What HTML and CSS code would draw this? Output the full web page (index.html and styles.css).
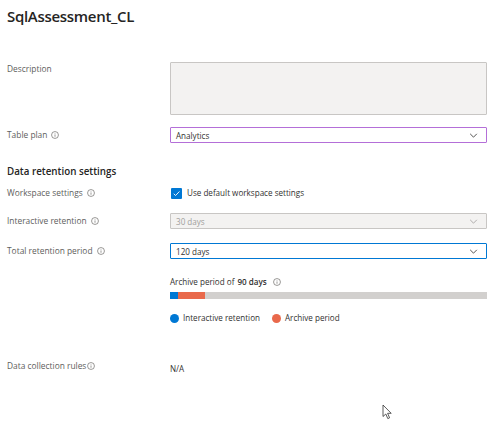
FILE: index.html
```html
<!DOCTYPE html>
<html>
<head>
<meta charset="utf-8">
<link rel="stylesheet" href="styles.css">
</head>
<body>
<div class="page">
  <h1 class="title">SqlAssessment_CL</h1>

  <div class="row row-desc">
    <div class="label">Description</div>
    <div class="field"><div class="textarea"></div></div>
  </div>

  <div class="row row-plan">
    <div class="label">Table plan <svg class="info" viewBox="0 0 10 10"><circle cx="5" cy="5" r="4.3"/><line x1="5" y1="4.3" x2="5" y2="7.2"/><circle class="dot" cx="5" cy="2.9" r="0.5"/></svg></div>
    <div class="field">
      <div class="select select-plan"><span>Analytics</span><svg class="chev" viewBox="0 0 10 6"><polyline points="1,1 5,5 9,1"/></svg></div>
    </div>
  </div>

  <h2 class="section">Data retention settings</h2>

  <div class="row row-ws">
    <div class="label">Workspace settings <svg class="info" viewBox="0 0 10 10"><circle cx="5" cy="5" r="4.3"/><line x1="5" y1="4.3" x2="5" y2="7.2"/><circle class="dot" cx="5" cy="2.9" r="0.5"/></svg></div>
    <div class="field check-field">
      <span class="checkbox"><svg viewBox="0 0 12 12"><polyline points="3,6.3 5,8.2 9.2,3.8"/></svg></span>
      <span class="value">Use default workspace settings</span>
    </div>
  </div>

  <div class="row row-int">
    <div class="label">Interactive retention <svg class="info" viewBox="0 0 10 10"><circle cx="5" cy="5" r="4.3"/><line x1="5" y1="4.3" x2="5" y2="7.2"/><circle class="dot" cx="5" cy="2.9" r="0.5"/></svg></div>
    <div class="field">
      <div class="select select-disabled"><span>30 days</span><svg class="chev" viewBox="0 0 10 6"><polyline points="1,1 5,5 9,1"/></svg></div>
    </div>
  </div>

  <div class="row row-total">
    <div class="label">Total retention period <svg class="info" viewBox="0 0 10 10"><circle cx="5" cy="5" r="4.3"/><line x1="5" y1="4.3" x2="5" y2="7.2"/><circle class="dot" cx="5" cy="2.9" r="0.5"/></svg></div>
    <div class="field">
      <div class="select select-focus"><span>120 days</span><svg class="chev" viewBox="0 0 10 6"><polyline points="1,1 5,5 9,1"/></svg></div>
    </div>
  </div>

  <div class="row row-archive">
    <div class="label"></div>
    <div class="field">
      <div class="archive-text">Archive period of <b>90 days</b> <svg class="info" viewBox="0 0 10 10"><circle cx="5" cy="5" r="4.3"/><line x1="5" y1="4.3" x2="5" y2="7.2"/><circle class="dot" cx="5" cy="2.9" r="0.5"/></svg></div>
      <div class="bar">
        <div class="seg seg-int"></div>
        <div class="seg seg-arc"></div>
      </div>
      <div class="legend">
        <span class="legend-item"><span class="dotmark dot-int"></span>Interactive retention</span>
        <span class="legend-item"><span class="dotmark dot-arc"></span>Archive period</span>
      </div>
    </div>
  </div>

  <div class="row row-dcr">
    <div class="label label-tight">Data collection rules <svg class="info" viewBox="0 0 10 10"><circle cx="5" cy="5" r="4.3"/><line x1="5" y1="4.3" x2="5" y2="7.2"/><circle class="dot" cx="5" cy="2.9" r="0.5"/></svg></div>
    <div class="field"><span class="value">N/A</span></div>
  </div>

  <svg class="cursor" viewBox="0 0 10 16"><path d="M1 1 L1 12.5 L3.8 10 L5.8 14.6 L7.6 13.8 L5.6 9.3 L9.2 9.3 Z"/></svg>
</div>
</body>
</html>
```

FILE: styles.css
```css
html, body {
  margin: 0;
  padding: 0;
  background: #ffffff;
}

body {
  font-family: "Open Sans", "Noto Sans", sans-serif;
  color: #323130;
  width: 500px;
  height: 422px;
  overflow: hidden;
}

.page {
  position: relative;
  padding: 6px 13px 0 7px;
  height: 422px;
  box-sizing: border-box;
}

.title {
  margin: 0;
  font-size: 15px;
  line-height: 20px;
  font-weight: 600;
  color: #252423;
  letter-spacing: -0.3px;
}

.row {
  display: flex;
  align-items: center;
}

.label {
  width: 163px;
  flex: none;
  font-size: 8.4px;
  line-height: 14px;
  color: #605e5c;
  display: flex;
  align-items: center;
  gap: 4px;
}

.label-tight {
  gap: 1px;
}

.field {
  flex: 1;
  min-width: 0;
}

.info {
  width: 8px;
  height: 8px;
  fill: none;
  stroke: #605e5c;
  stroke-width: 0.8;
}

.info .dot {
  fill: #605e5c;
  stroke: none;
}

.row-desc {
  margin-top: 36px;
  align-items: flex-start;
}

.textarea {
  height: 53px;
  box-sizing: border-box;
  background: #f3f2f1;
  border: 1px solid #c8c6c4;
  border-radius: 1px;
}

.row-plan {
  margin-top: 12px;
}

.select {
  height: 16px;
  box-sizing: border-box;
  border: 1px solid #8a8886;
  border-radius: 1px;
  display: flex;
  align-items: center;
  justify-content: space-between;
  padding: 0 8px 0 5px;
  font-size: 8.1px;
  color: #323130;
}

.chev {
  width: 9px;
  height: 5px;
  fill: none;
  stroke: #323130;
  stroke-width: 1;
}

.select-plan {
  border-color: #b46fd8;
}

.select-disabled {
  background: #f3f2f1;
  border-color: #c8c6c4;
  color: #a19f9d;
}

.select-disabled .chev {
  stroke: #a19f9d;
}

.select-focus {
  border-color: #0078d4;
}

.section {
  margin: 22px 0 0;
  font-size: 9.8px;
  line-height: 14px;
  font-weight: 600;
  color: #252423;
}

.row-ws {
  margin-top: 7px;
}

.check-field {
  display: flex;
  align-items: center;
  gap: 5px;
  padding-left: 1px;
}

.checkbox {
  width: 11px;
  height: 11px;
  background: #0078d4;
  border-radius: 1px;
  display: inline-flex;
}

.checkbox svg {
  width: 11px;
  height: 11px;
  fill: none;
  stroke: #ffffff;
  stroke-width: 1;
}

.value {
  font-size: 8.1px;
  line-height: 14px;
  color: #323130;
}

.row-int {
  margin-top: 13px;
}

.row-total {
  margin-top: 14px;
}

.row-archive {
  margin-top: 17px;
}

.archive-text {
  font-size: 8.1px;
  line-height: 12px;
  color: #323130;
  display: flex;
  align-items: center;
  gap: 3px;
}

.archive-text b {
  font-weight: 600;
}

.archive-text .info {
  margin-left: 3px;
}

.bar {
  margin-top: 4px;
  height: 7px;
  background: #d2d0ce;
  display: flex;
}

.seg-int {
  width: 8px;
  background: #0078d4;
}

.seg-arc {
  width: 27px;
  background: #e9694b;
}

.legend {
  margin-top: 13px;
  display: flex;
  gap: 12px;
  font-size: 8.1px;
  line-height: 12px;
  color: #323130;
}

.legend-item {
  display: flex;
  align-items: center;
  gap: 4px;
}

.dotmark {
  width: 9px;
  height: 9px;
  border-radius: 50%;
  display: inline-block;
}

.dot-int {
  background: #0078d4;
}

.dot-arc {
  background: #e9694b;
}

.row-dcr {
  margin-top: 31px;
}

.cursor {
  position: absolute;
  left: 382px;
  top: 404px;
  width: 10px;
  height: 16px;
  fill: #ffffff;
  stroke: #333333;
  stroke-width: 0.8;
}
```
